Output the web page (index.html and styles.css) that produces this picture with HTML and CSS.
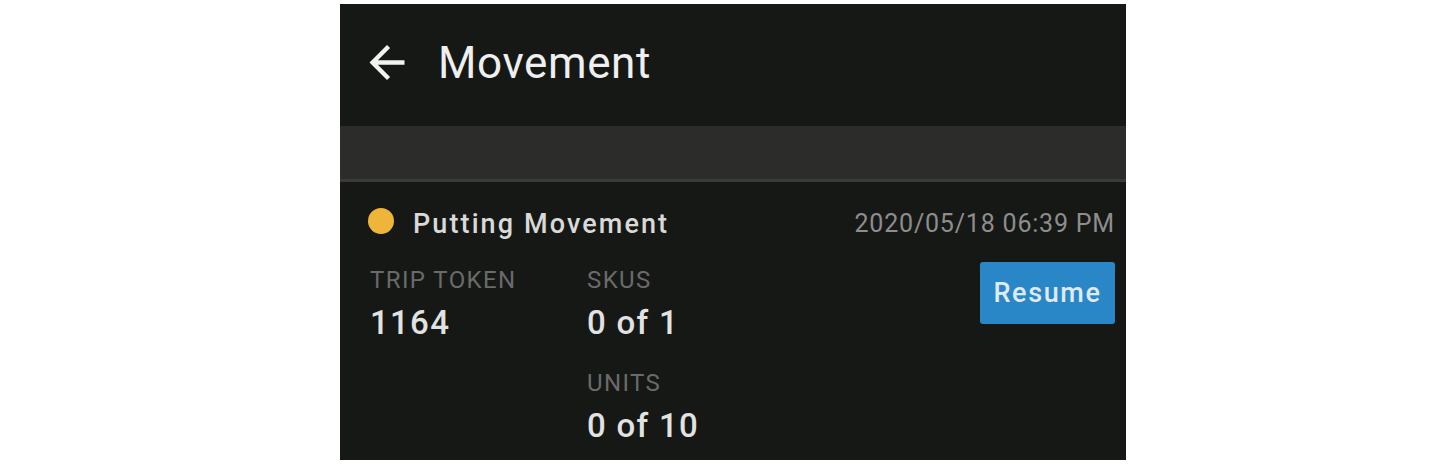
FILE: index.html
```html
<!DOCTYPE html>
<html>
<head>
<meta charset="utf-8">
<link rel="stylesheet" href="styles.css">
</head>
<body>
<div class="screen">
  <header class="appbar">
    <svg class="back" viewBox="4 4 16 16" width="36" height="35" aria-hidden="true">
      <path d="M20 11H7.83l5.59-5.59L12 4l-8 8 8 8 1.41-1.41L7.83 13H20v-2z" fill="#f2f2f2"/>
    </svg>
    <h1 class="title">Movement</h1>
  </header>
  <div class="tabbar"></div>
  <section class="card">
    <div class="card-top">
      <div class="status">
        <span class="dot"></span>
        <span class="status-text">Putting Movement</span>
      </div>
      <span class="date">2020/05/18 06:39 PM</span>
    </div>
    <div class="card-body">
      <div class="col col-token">
        <div class="label">TRIP TOKEN</div>
        <div class="value">1164</div>
      </div>
      <div class="col col-counts">
        <div class="label">SKUS</div>
        <div class="value">0 of 1</div>
        <div class="label label-gap">UNITS</div>
        <div class="value">0 of 10</div>
      </div>
      <button class="resume">Resume</button>
    </div>
  </section>
</div>
</body>
</html>
```
FILE: styles.css
```css
html, body {
  margin: 0;
  padding: 0;
  background: #ffffff;
}
body {
  font-family: Roboto, "Liberation Sans", sans-serif;
  overflow: hidden;
}
.screen {
  margin: 4px 0 0 340px;
  width: 786px;
  height: 456px;
  background: #161816;
  display: flex;
  flex-direction: column;
}
.appbar {
  height: 122px;
  box-sizing: border-box;
  display: flex;
  align-items: center;
  padding: 0 0 5px 29px;
}
.back {
  display: block;
  flex: none;
}
.title {
  margin: 0 0 0 33px;
  font-size: 44px;
  font-weight: 400;
  line-height: 52px;
  color: #efefef;
  letter-spacing: 0.6px;
}
.tabbar {
  height: 53px;
  background: #2c2c2b;
  border-bottom: 3px solid #3a3a3a;
  flex: none;
}
.card {
  padding: 27px 11px 0 28px;
}
.card-top {
  display: flex;
  justify-content: space-between;
  align-items: center;
  height: 30px;
}
.status {
  display: flex;
  align-items: center;
}
.dot {
  width: 26px;
  height: 26px;
  border-radius: 50%;
  background: #efb43a;
  margin-top: -6px;
  flex: none;
}
.status-text {
  margin-left: 19px;
  font-size: 27px;
  line-height: 30px;
  font-weight: 500;
  color: #d9d9d9;
  letter-spacing: 2.1px;
}
.date {
  font-size: 25px;
  line-height: 30px;
  color: #8d8d8d;
  letter-spacing: 0.8px;
}
.card-body {
  display: flex;
  align-items: flex-start;
  margin-top: 27px;
}
.col-token {
  width: 219px;
  padding-left: 2px;
  box-sizing: border-box;
}
.label {
  font-size: 24px;
  line-height: 28px;
  color: #6a6a6a;
  letter-spacing: 1.4px;
}
.label-gap {
  margin-top: 26px;
}
.value {
  margin-top: 9px;
  font-size: 33px;
  line-height: 40px;
  font-weight: 500;
  color: #e2e2e2;
  letter-spacing: 1.3px;
}
.resume {
  margin: -4px 0 0 auto;
  width: 135px;
  height: 62px;
  border: none;
  border-radius: 3px;
  background: #2a87c7;
  color: #dfeaf2;
  font-family: Roboto, "Liberation Sans", sans-serif;
  font-size: 27px;
  font-weight: 500;
  letter-spacing: 1.6px;
  padding: 0;
}
```
